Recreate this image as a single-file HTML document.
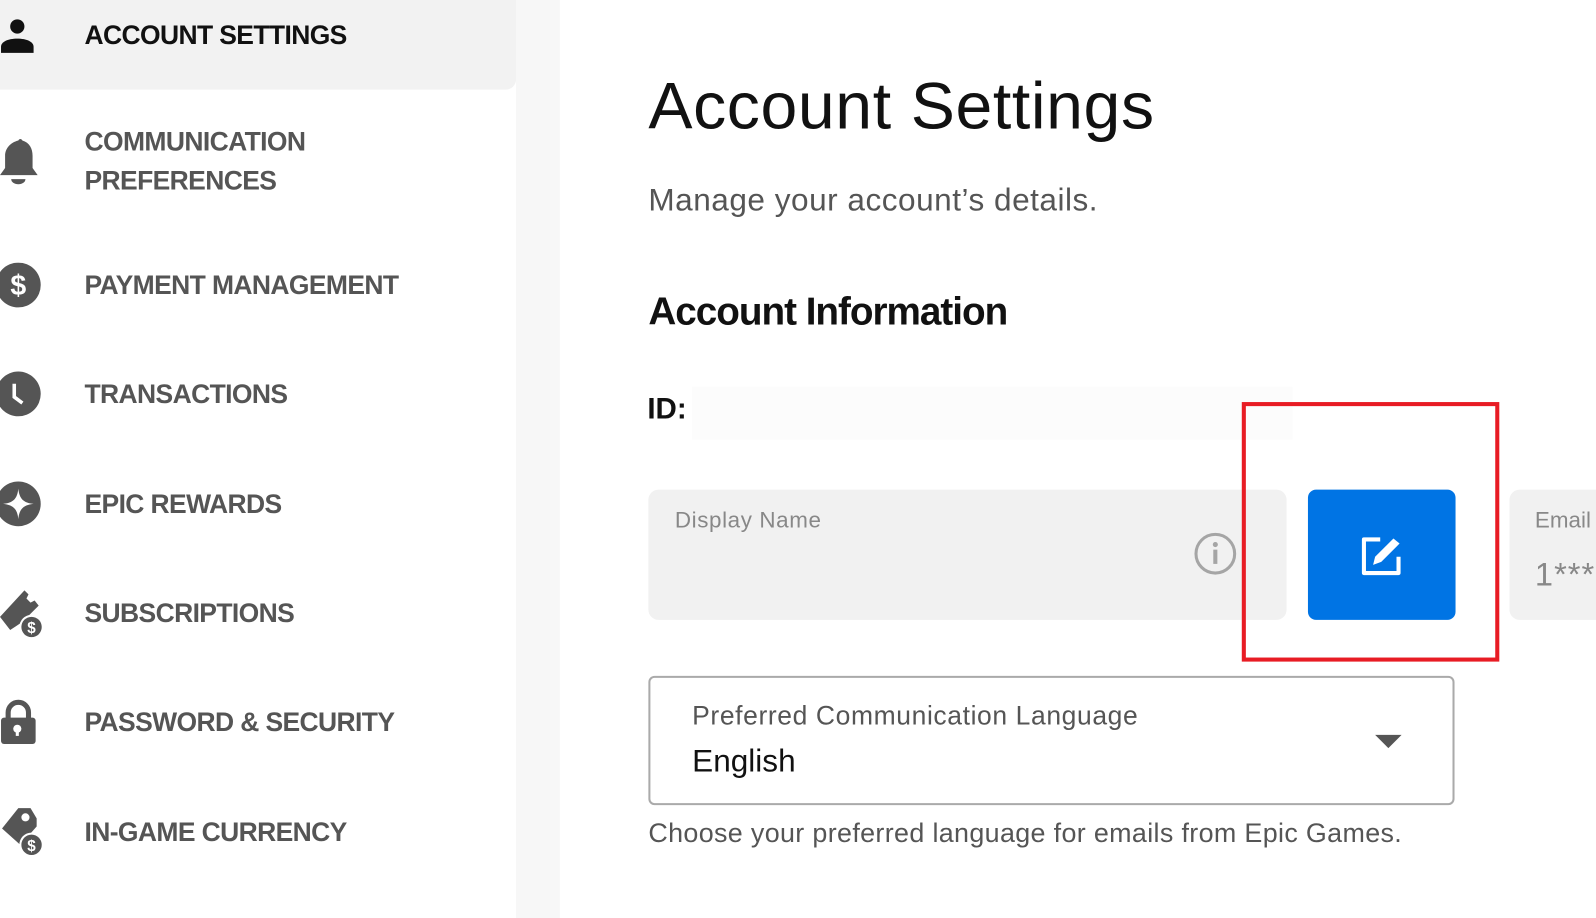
<!DOCTYPE html>
<html><head><meta charset="utf-8"><style>
*{margin:0;padding:0;box-sizing:border-box}
body{width:1596px;height:902px;overflow:hidden;background:#fff;font-family:"Liberation Sans",sans-serif;position:relative}
#w{position:absolute;left:0;top:0;width:1568px;height:886px;transform:scale(1.01786);transform-origin:0 0}
.side{position:absolute;left:0;top:0;width:507px;height:902px;background:#fff}
.gap{position:absolute;left:507px;top:0;width:43px;height:902px;background:#f7f7f7}
.active{position:absolute;left:0;top:0;width:507px;height:88px;background:#f2f2f2;border-radius:0 0 10px 0}
.item{position:absolute;left:83px;font-weight:bold;font-size:26px;color:#555;letter-spacing:-0.6px;line-height:38px}
.ic{position:absolute;left:0}
.abs{position:absolute}
</style></head><body><div id="w">
<div class="side"></div><div class="gap"></div><div class="active"></div>
<svg class="ic" style="top:16px" width="36" height="40" viewBox="0 0 36 40"><circle cx="17" cy="10" r="7" fill="#111"/><path d="M1 36v-6c0-5 7-8 16-8s16 3 16 8v6z" fill="#111"/></svg>
<div class="item" style="top:15px;color:#111">ACCOUNT SETTINGS</div>
<svg class="ic" style="top:132px" width="40" height="52" viewBox="0 0 40 52"><path d="M18 6c1-2 3-2 4 0c7 2 10 8 10 15v12l5 7H0l5-7V21C5 14 10 8 18 6z" fill="#555"/><path d="M11 44h14a7 5 0 0 1-14 0z" fill="#555"/></svg>
<div class="item" style="top:120px">COMMUNICATION<br>PREFERENCES</div>
<svg class="ic" style="top:258px" width="42" height="46" viewBox="0 0 42 46"><circle cx="18" cy="22" r="22" fill="#555"/><text x="18" y="32" text-anchor="middle" font-family="Liberation Sans" font-weight="bold" font-size="28" fill="#fff">$</text></svg>
<div class="item" style="top:261px">PAYMENT MANAGEMENT</div>
<svg class="ic" style="top:364px" width="42" height="46" viewBox="0 0 42 46"><circle cx="18" cy="23" r="22" fill="#555"/><path d="M14 13v13l8 6" stroke="#fff" stroke-width="3.5" fill="none"/></svg>
<div class="item" style="top:368px">TRANSACTIONS</div>
<svg class="ic" style="top:472px" width="42" height="46" viewBox="0 0 42 46"><circle cx="18" cy="23" r="22" fill="#555"/><path d="M18 8C19 18 23 22 33 23C23 24 19 28 18 38C17 28 13 24 3 23C13 22 17 18 18 8z" fill="#fff"/></svg>
<div class="item" style="top:476px">EPIC REWARDS</div>
<svg class="ic" style="top:578px" width="44" height="52" viewBox="0 0 44 52"><path d="M0 28L24 2l4 4-2 4 4 4 4-2 4 5-16 16-6 4-6 4z" fill="#555"/><circle cx="31" cy="38" r="12" fill="#fff"/><circle cx="31" cy="38" r="10" fill="#555"/><text x="31" y="44" text-anchor="middle" font-family="Liberation Sans" font-weight="bold" font-size="15" fill="#fff">$</text></svg>
<div class="item" style="top:583px">SUBSCRIPTIONS</div>
<svg class="ic" style="top:686px" width="40" height="48" viewBox="0 0 40 48"><path d="M8 20v-6a10 10 0 0 1 20 0v6" stroke="#555" stroke-width="5" fill="none"/><rect x="1" y="19" width="34" height="26" rx="3" fill="#555"/><circle cx="17" cy="30" r="4" fill="#fff"/><rect x="15.5" y="30" width="3" height="7" fill="#fff"/></svg>
<div class="item" style="top:690px">PASSWORD &amp; SECURITY</div>
<svg class="ic" style="top:792px" width="44" height="52" viewBox="0 0 44 52"><path d="M2 22L18 2h12l6 10v8L20 38z" fill="#555"/><circle cx="25" cy="11" r="4" fill="#fff"/><circle cx="31" cy="38" r="12" fill="#fff"/><circle cx="31" cy="38" r="10" fill="#555"/><text x="31" y="44" text-anchor="middle" font-family="Liberation Sans" font-weight="bold" font-size="15" fill="#fff">$</text></svg>
<div class="item" style="top:798px">IN-GAME CURRENCY</div>

<div class="abs" style="left:637px;top:66px;font-size:65px;color:#111;letter-spacing:0.6px">Account Settings</div>
<div class="abs" style="left:637px;top:179px;font-size:31px;color:#555;letter-spacing:0.5px">Manage your account’s details.</div>
<div class="abs" style="left:637px;top:286px;font-size:38px;font-weight:bold;color:#111;letter-spacing:-1px">Account Information</div>
<div class="abs" style="left:636px;top:386px;font-size:29px;font-weight:bold;color:#111">ID:</div>
<div class="abs" style="left:680px;top:380px;width:590px;height:52px;background:#fcfcfc"></div>

<div class="abs" style="left:637px;top:481px;width:627px;height:128px;background:#f1f1f1;border-radius:10px"></div>
<div class="abs" style="left:663px;top:498px;font-size:22px;color:#888;letter-spacing:0.6px">Display Name</div>
<svg class="abs" style="left:1172px;top:522px" width="44" height="44" viewBox="0 0 44 44"><circle cx="22" cy="22" r="19" stroke="#a5a5a5" stroke-width="3" fill="none"/><rect x="20" y="18" width="4" height="14" fill="#a5a5a5"/><circle cx="22" cy="13" r="2.5" fill="#a5a5a5"/></svg>
<div class="abs" style="left:1285px;top:481px;width:145px;height:128px;background:#0074e4;border-radius:8px"></div>
<svg class="abs" style="left:1336px;top:524px" width="44" height="44" viewBox="0 0 44 44"><path d="M20 6H4v33h34V23" stroke="#fff" stroke-width="4" fill="none" stroke-linejoin="round"/><path d="M13 31l2-8L33 5l6 5-18 18z" fill="#fff"/></svg>
<div class="abs" style="left:1220px;top:395px;width:253px;height:255px;border:4px solid #e81c24"></div>
<div class="abs" style="left:1483px;top:481px;width:120px;height:128px;background:#f1f1f1;border-radius:10px"></div>
<div class="abs" style="left:1508px;top:498px;font-size:22px;color:#888">Email</div>
<div class="abs" style="left:1508px;top:546px;font-size:32px;color:#888;letter-spacing:1px">1***</div>

<div class="abs" style="left:637px;top:664px;width:792px;height:127px;border:2px solid #aaa;border-radius:6px"></div>
<div class="abs" style="left:680px;top:688px;font-size:26px;color:#555;letter-spacing:0.6px">Preferred Communication Language</div>
<div class="abs" style="left:680px;top:730px;font-size:31px;color:#111">English</div>
<svg class="abs" style="left:1350px;top:721px" width="28" height="16" viewBox="0 0 28 16"><path d="M1 1h26L14 14z" fill="#555"/></svg>
<div class="abs" style="left:637px;top:803px;font-size:26.4px;color:#555;letter-spacing:0.35px">Choose your preferred language for emails from Epic Games.</div>
</div></body></html>
